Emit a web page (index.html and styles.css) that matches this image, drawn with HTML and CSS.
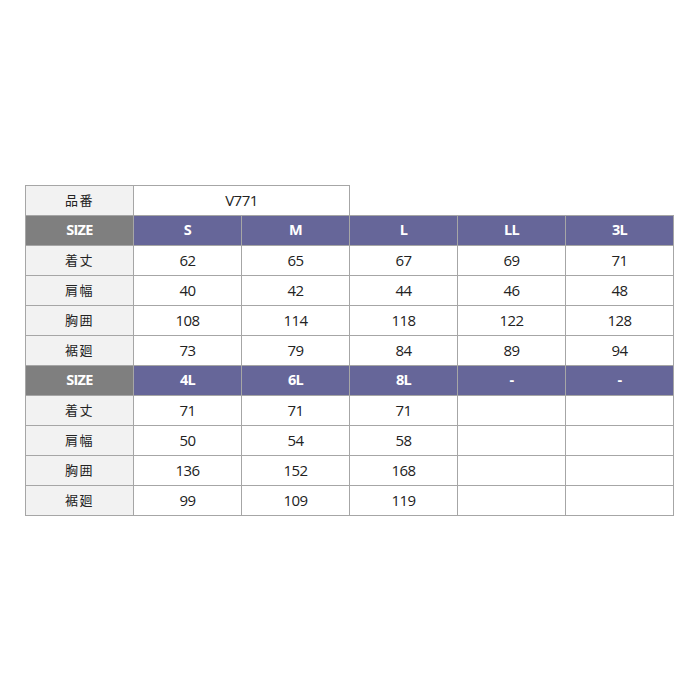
FILE: index.html
```html
<!DOCTYPE html>
<html lang="ja">
<head>
<meta charset="utf-8">
<link rel="stylesheet" href="styles.css">
</head>
<body>
<table class="size-table">
  <colgroup>
    <col><col><col><col><col><col>
  </colgroup>
  <tr>
    <td class="label">品番</td>
    <td colspan="2" class="val">V771</td>
    <td class="blank"></td><td class="blank"></td><td class="blank"></td>
  </tr>
  <tr class="head">
    <th class="size">SIZE</th><th>S</th><th>M</th><th>L</th><th>LL</th><th>3L</th>
  </tr>
  <tr><td class="label">着丈</td><td>62</td><td>65</td><td>67</td><td>69</td><td>71</td></tr>
  <tr><td class="label">肩幅</td><td>40</td><td>42</td><td>44</td><td>46</td><td>48</td></tr>
  <tr><td class="label">胸囲</td><td>108</td><td>114</td><td>118</td><td>122</td><td>128</td></tr>
  <tr><td class="label">裾廻</td><td>73</td><td>79</td><td>84</td><td>89</td><td>94</td></tr>
  <tr class="head">
    <th class="size">SIZE</th><th>4L</th><th>6L</th><th>8L</th><th>-</th><th>-</th>
  </tr>
  <tr><td class="label">着丈</td><td>71</td><td>71</td><td>71</td><td></td><td></td></tr>
  <tr><td class="label">肩幅</td><td>50</td><td>54</td><td>58</td><td></td><td></td></tr>
  <tr><td class="label">胸囲</td><td>136</td><td>152</td><td>168</td><td></td><td></td></tr>
  <tr><td class="label">裾廻</td><td>99</td><td>109</td><td>119</td><td></td><td></td></tr>
</table>
</body>
</html>
```

FILE: styles.css
```css
html, body {
  margin: 0;
  padding: 0;
  background: #ffffff;
}
body {
  padding: 185px 0 0 25px;
  font-family: "Open Sans", "Noto Sans CJK JP", sans-serif;
}
.size-table {
  border-collapse: collapse;
  table-layout: fixed;
  width: 649px;
}
.size-table col {
  width: 108px;
}
.size-table td,
.size-table th {
  height: 27px;
  padding: 0 0 2px 0;
  border: 1px solid #a6a6a6;
  text-align: center;
  vertical-align: middle;
  font-size: 15px;
  line-height: 18px;
  color: #222222;
  font-weight: normal;
  letter-spacing: -0.5px;
}
.size-table td.label {
  background: #f2f2f2;
  font-family: "Noto Sans CJK JP", sans-serif;
  font-size: 13px;
  letter-spacing: 1.5px;
}
.size-table td.blank {
  border: none;
  border-bottom: 1px solid #a6a6a6;
}
.size-table .head th {
  background: #666699;
  color: #ffffff;
  font-weight: bold;
  font-size: 14.5px;
  letter-spacing: -0.7px;
}
.size-table .head th.size {
  background: #7f7f7f;
}
```
